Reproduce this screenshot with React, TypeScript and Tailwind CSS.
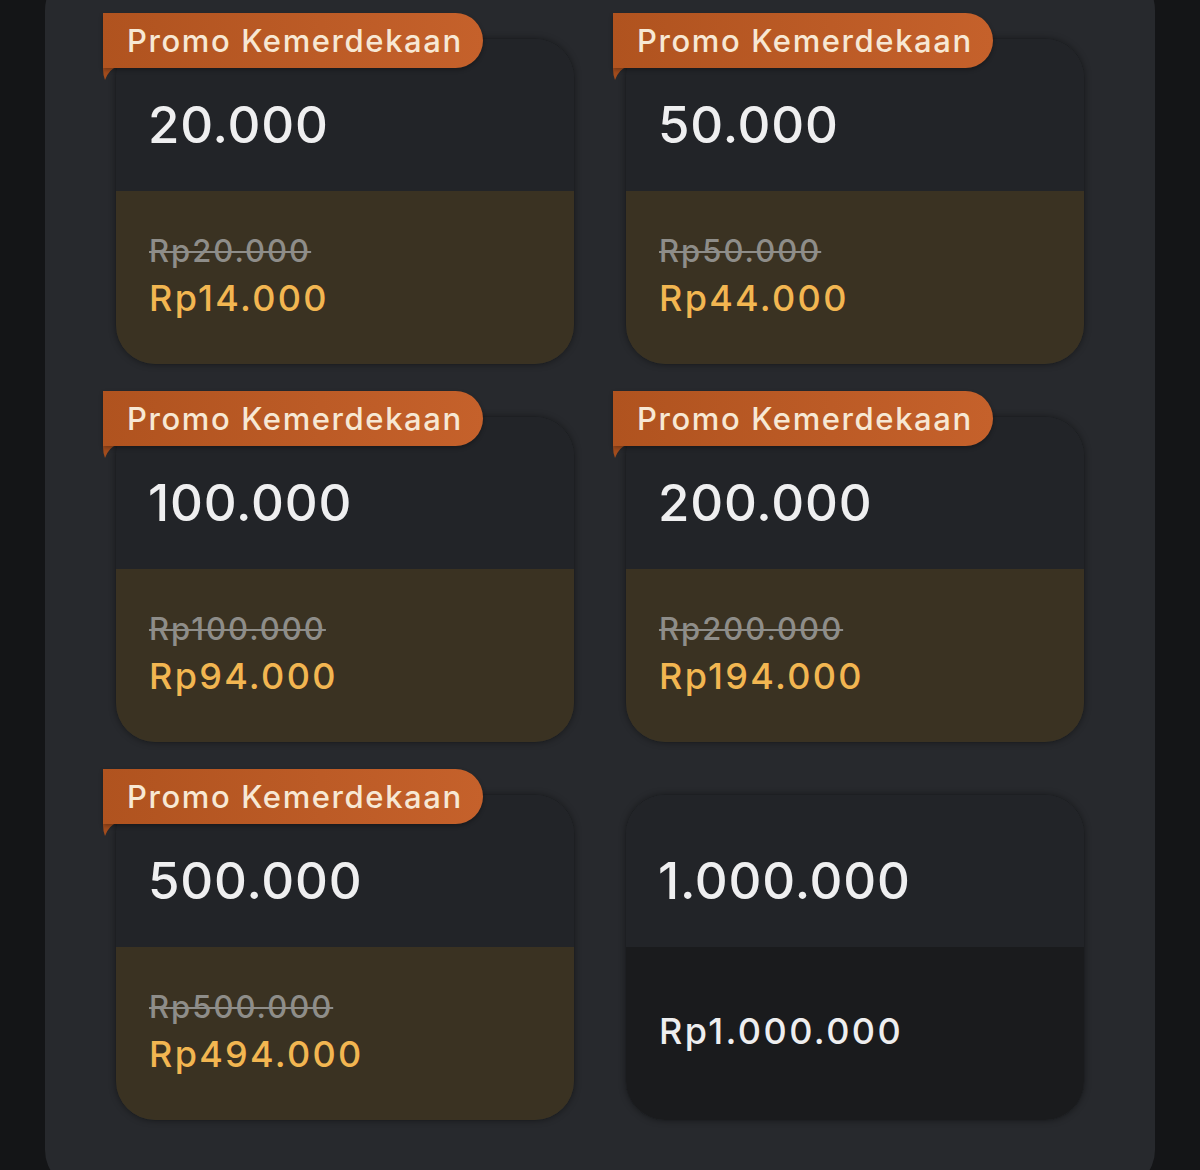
import React from 'react';

type Item = { amount: string; original?: string; price: string; promo: boolean };

const items: Item[] = [
  { amount: '20.000', original: 'Rp20.000', price: 'Rp14.000', promo: true },
  { amount: '50.000', original: 'Rp50.000', price: 'Rp44.000', promo: true },
  { amount: '100.000', original: 'Rp100.000', price: 'Rp94.000', promo: true },
  { amount: '200.000', original: 'Rp200.000', price: 'Rp194.000', promo: true },
  { amount: '500.000', original: 'Rp500.000', price: 'Rp494.000', promo: true },
  { amount: '1.000.000', price: 'Rp1.000.000', promo: false },
];

const PromoRibbon: React.FC = () => (
  <div className="absolute -left-[12px] -top-[25px] z-10">
    {/* little fold hanging under the ribbon's left end */}
    <svg className="absolute left-0 top-[50px]" width="14" height="18" viewBox="0 0 14 18">
      <path d="M0 0 H14 V4 Q6 6 2 17 Q0 12 0 6 Z" fill="#a24c1d" />
    </svg>
    <div className="relative h-[55px] w-[380px] rounded-tl-[26px] rounded-r-full rounded-bl-[4px] bg-gradient-to-r from-[#b0531f] to-[#c5612b] flex items-center pl-[24px] shadow-[0_2px_4px_rgba(0,0,0,0.3)]">
      <span className="text-[31px] font-medium tracking-[1.6px] text-[#f7e8d4] leading-none">Promo Kemerdekaan</span>
    </div>
  </div>
);

const Card: React.FC<{ item: Item }> = ({ item }) => (
  <div className="relative h-[327px]">
    {item.promo && <PromoRibbon />}
    <div className="h-full rounded-[40px] overflow-hidden flex flex-col border border-[#1d1f22] shadow-[0_0_6px_rgba(0,0,0,0.35)]">
      <div className="h-[152px] bg-[#222428] flex items-center pl-[32px] pt-[18px]">
        <span className="text-[51px] font-medium tracking-[0.8px] text-[#efeff0] leading-none">{item.amount}</span>
      </div>
      {item.promo ? (
        <div className="flex-1 bg-[#3a3222] flex flex-col pl-[33px] pt-[44px]">
          <span className="text-[31px] font-medium tracking-[2px] text-[#8e8d89] line-through decoration-[2px] leading-none">{item.original}</span>
          <span className="mt-[14px] text-[36px] font-medium tracking-[2.3px] text-[#f2b651] leading-none">{item.price}</span>
        </div>
      ) : (
        <div className="flex-1 bg-[#1a1b1d] flex items-center pl-[33px] pb-[6px]">
          <span className="text-[36px] font-medium tracking-[2.4px] text-[#eeeeef] leading-none">{item.price}</span>
        </div>
      )}
    </div>
  </div>
);

export default function App() {
  return (
    <div className="w-[1200px] h-[1170px] overflow-hidden bg-[#141517]" style={{ fontFamily: 'Inter, "Open Sans", sans-serif' }}>
      <div className="ml-[45px] w-[1110px] h-[1220px] -mt-[30px] rounded-[40px] bg-[#27292d] px-[70px] pt-[68px]">
        <div className="grid grid-cols-2 gap-x-[50px] gap-y-[51px]">
          {items.map((it) => (
            <Card key={it.amount} item={it} />
          ))}
        </div>
      </div>
    </div>
  );
}
